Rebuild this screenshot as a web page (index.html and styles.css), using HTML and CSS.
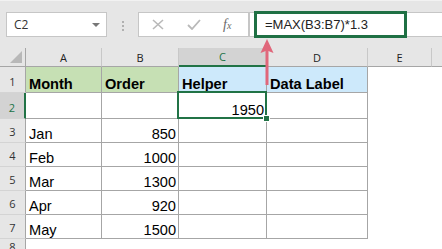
FILE: index.html
```html
<!DOCTYPE html>
<html>
<head>
	<title>Helper column</title>
	<meta charset="UTF-8">
	<link rel="stylesheet" href="styles.css">
</head>
<body>

<div id="window">

	<div id="topbar">
		<div class="namebox">
			<span>C2</span>
			<span class="drop"></span>
		</div>
		<div class="grip"><i></i><i></i><i></i></div>
		<div class="cmdbox">
			<svg class="cmd-x" width="12" height="11" viewBox="0 0 12 11"><path d="M1 1L11 10M11 1L1 10" stroke="#b9b9b9" stroke-width="1.6" fill="none"/></svg>
			<svg class="cmd-ok" width="14" height="11" viewBox="0 0 14 11"><path d="M1 6L5 10L13 1" stroke="#b9b9b9" stroke-width="1.8" fill="none"/></svg>
			<span class="fx">f<small>x</small></span>
		</div>
		<div class="formula">
			<div class="callout">=MAX(B3:B7)*1.3</div>
		</div>
	</div>

	<div id="sheet">
		<!-- column headers -->
		<div class="corner"><span></span></div>
		<div class="colhead">A</div>
		<div class="colhead">B</div>
		<div class="colhead sel">C</div>
		<div class="colhead">D</div>
		<div class="colhead">E</div>
		<div class="colhead last"></div>

		<!-- row 1 -->
		<div class="rowhead">1</div>
		<div class="cell green bold">Month</div>
		<div class="cell green bold">Order</div>
		<div class="cell blue bold">Helper</div>
		<div class="cell blue bold">Data Label</div>
		<div class="empty"></div>
		<div class="empty"></div>

		<!-- row 2 -->
		<div class="rowhead sel">2</div>
		<div class="cell"></div>
		<div class="cell"></div>
		<div class="cell num active">1950<span class="handle"></span></div>
		<div class="cell"></div>
		<div class="empty"></div>
		<div class="empty"></div>

		<!-- row 3 -->
		<div class="rowhead">3</div>
		<div class="cell">Jan</div>
		<div class="cell num">850</div>
		<div class="cell"></div>
		<div class="cell"></div>
		<div class="empty"></div>
		<div class="empty"></div>

		<!-- row 4 -->
		<div class="rowhead">4</div>
		<div class="cell">Feb</div>
		<div class="cell num">1000</div>
		<div class="cell"></div>
		<div class="cell"></div>
		<div class="empty"></div>
		<div class="empty"></div>

		<!-- row 5 -->
		<div class="rowhead">5</div>
		<div class="cell">Mar</div>
		<div class="cell num">1300</div>
		<div class="cell"></div>
		<div class="cell"></div>
		<div class="empty"></div>
		<div class="empty"></div>

		<!-- row 6 -->
		<div class="rowhead">6</div>
		<div class="cell">Apr</div>
		<div class="cell num">920</div>
		<div class="cell"></div>
		<div class="cell"></div>
		<div class="empty"></div>
		<div class="empty"></div>

		<!-- row 7 -->
		<div class="rowhead">7</div>
		<div class="cell">May</div>
		<div class="cell num">1500</div>
		<div class="cell"></div>
		<div class="cell"></div>
		<div class="empty"></div>
		<div class="empty"></div>

		<!-- row 8 -->
		<div class="rowhead">8</div>
		<div class="empty"></div>
		<div class="empty"></div>
		<div class="empty"></div>
		<div class="empty"></div>
		<div class="empty"></div>
		<div class="empty"></div>
	</div>

	<!-- arrow pointing from the helper column to the formula -->
	<svg class="arrow" width="18" height="50" viewBox="0 0 18 50">
		<path d="M9 1L15.5 15L9 12.5L2.5 15Z" fill="#e0677b"/>
		<rect x="7.5" y="12" width="3" height="35" fill="#e0677b"/>
	</svg>

</div>

</body>
</html>
```

FILE: styles.css
```css
* {
	box-sizing: border-box;
}
body {
	margin: 0;
	padding: 0;
	background: #fff;
}
#window {
	position: relative;
	width: 442px;
	height: 249px;
	overflow: hidden;
}

/* formula bar */
#topbar {
	display: flex;
	align-items: flex-start;
	height: 48px;
	padding: 12px 0 0 6px;
	background: #e6e6e6;
	border-top: 1px solid #f2f2f2;
}
.namebox {
	display: flex;
	align-items: center;
	justify-content: space-between;
	width: 101px;
	height: 25px;
	margin-top: -1px;
	padding: 0 6px 0 7px;
	background: #fff;
	border: 1px solid #c6c6c6;
	font-family: "Open Sans", "Noto Sans", sans-serif;
	font-size: 12px;
	color: #333;
}
.drop {
	width: 0;
	height: 0;
	border-left: 4px solid transparent;
	border-right: 4px solid transparent;
	border-top: 4px solid #777;
}
.grip {
	display: flex;
	flex-direction: column;
	align-items: center;
	gap: 2px;
	width: 31px;
	padding-top: 8px;
}
.grip i {
	display: block;
	width: 2px;
	height: 2px;
	background: #b0b0b0;
}
.cmdbox {
	display: flex;
	align-items: center;
	width: 111px;
	height: 25px;
	margin-top: -1px;
	background: #fff;
	border: 1px solid #c6c6c6;
}
.cmd-x {
	margin-left: 13px;
}
.cmd-ok {
	margin-left: 23px;
}
.fx {
	margin-left: 22px;
	font-family: "Liberation Serif", serif;
	font-style: italic;
	font-size: 14px;
	color: #6a6a6a;
}
.fx small {
	font-size: 10px;
}
.formula {
	flex: 1;
	height: 25px;
	margin-top: -1px;
	margin-left: 0;
	background: #fff;
	border: 1px solid #c6c6c6;
	border-right: none;
}
.callout {
	width: 153px;
	height: 27px;
	margin: -2px 0 0 4px;
	padding: 3px 0 0 8px;
	border: 3px solid #1f7044;
	font-family: "Liberation Sans", Arial, sans-serif;
	font-size: 13px;
	line-height: 16px;
	color: #222;
}

/* grid */
#sheet {
	display: grid;
	grid-template-columns: 26px 76px 77px 88px 101px 64px 1fr;
	grid-template-rows: 19px 26px 26px repeat(5, 24px) 1fr;
	height: 201px;
	font-family: "Liberation Sans", Arial, sans-serif;
	font-size: 14.6px;
	color: #000;
}
.corner {
	display: flex;
	align-items: flex-end;
	justify-content: flex-end;
	padding: 0 3px 3px 0;
	background: #e6e6e6;
	border-right: 1px solid #a6a6a6;
	border-bottom: 1px solid #a6a6a6;
}
.corner span {
	width: 0;
	height: 0;
	border-left: 12px solid transparent;
	border-bottom: 12px solid #b8b8b8;
}
.colhead {
	display: flex;
	align-items: center;
	justify-content: center;
	background: #e6e6e6;
	border-right: 1px solid #c8c8c8;
	border-bottom: 1px solid #a6a6a6;
	font-family: "Open Sans", "Noto Sans", sans-serif;
	font-size: 11px;
	color: #222;
}
.colhead.last {
	border-right: none;
}
.colhead.sel {
	background: #d3d3d3;
	border-bottom: 2px solid #217346;
	color: #217346;
}
.rowhead {
	display: flex;
	align-items: flex-end;
	justify-content: center;
	padding-bottom: 3px;
	background: #e6e6e6;
	border-right: 1px solid #a6a6a6;
	border-bottom: 1px solid #d4d4d4;
	font-family: "Open Sans", "Noto Sans", sans-serif;
	font-size: 11px;
	color: #333;
}
.rowhead.sel {
	background: #d3d3d3;
	border-right: 2px solid #217346;
	color: #217346;
}
.cell {
	position: relative;
	display: flex;
	align-items: flex-end;
	padding: 0 3px 0 3px;
	line-height: 16px;
	white-space: nowrap;
	border-right: 1px solid #a6a6a6;
	border-bottom: 1px solid #a6a6a6;
}
.cell.num {
	justify-content: flex-end;
	padding-right: 2px;
}
.cell.bold {
	font-weight: bold;
}
.cell.green {
	background: #c6e0b4;
}
.cell.blue {
	background: #cde9fb;
}
.cell.active::after {
	content: "";
	position: absolute;
	top: -2px;
	left: -2px;
	right: -1px;
	bottom: -1px;
	border: 2px solid #217346;
}
.handle {
	position: absolute;
	right: -4px;
	bottom: -4px;
	width: 7px;
	height: 7px;
	background: #217346;
	border: 1px solid #fff;
	z-index: 1;
}
.empty {
	background: #fff;
}

.arrow {
	position: absolute;
	left: 258px;
	top: 38px;
}
```
